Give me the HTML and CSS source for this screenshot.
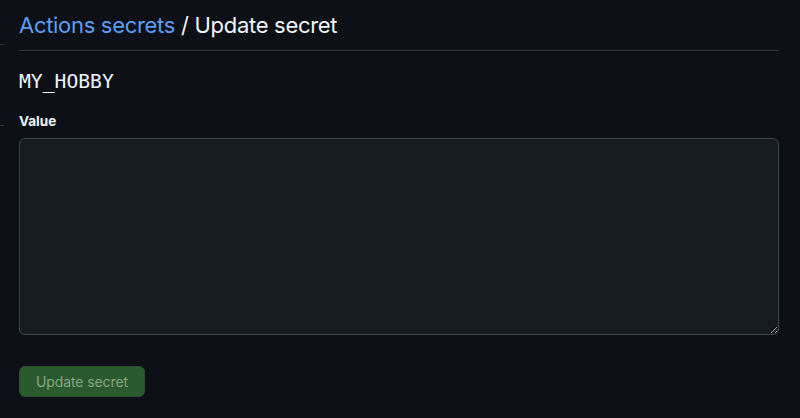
FILE: index.html
```html
<!DOCTYPE html>
<html>
<head>
<meta charset="utf-8">
<link rel="stylesheet" href="styles.css">
</head>
<body>
<span class="edge edge-top"></span>
<span class="edge edge-mid"></span>
<main class="page">
  <header class="subhead">
    <h2 class="subhead-title"><a class="crumb" href="#">Actions secrets</a> / Update secret</h2>
  </header>
  <div class="secret-name">MY_HOBBY</div>
  <form class="form">
    <label class="label" for="value">Value</label>
    <textarea id="value" class="textarea"></textarea>
    <div class="actions">
      <button type="button" class="btn-primary" disabled>Update secret</button>
    </div>
  </form>
</main>
</body>
</html>
```

FILE: styles.css
```css
html, body {
  margin: 0;
  padding: 0;
  background: #0d1117;
  color: #e6edf3;
  font-family: "Inter", "Liberation Sans", sans-serif;
}
.edge {
  position: absolute;
  left: 0;
  width: 4px;
  height: 1px;
  background: #30363d;
}
.edge-top { top: 44px; }
.edge-mid { top: 125px; }
.page {
  padding: 0 21px 0 19px;
}
.subhead {
  border-bottom: 1px solid #30363d;
  padding: 11px 0 10px;
}
.subhead-title {
  margin: 0;
  font-size: 22px;
  font-weight: 400;
  letter-spacing: -0.3px;
  line-height: 29px;
  color: #f0f6fc;
}
.crumb {
  color: #5c9ef7;
  text-decoration: none;
}
.secret-name {
  margin-top: 19px;
  font-family: "DejaVu Sans Mono", "Liberation Mono", monospace;
  font-size: 19.7px;
  line-height: 24px;
  color: #f0f6fc;
}
.form {
  margin-top: 18px;
  display: flex;
  flex-direction: column;
}
.label {
  font-size: 13.5px;
  font-weight: 700;
  line-height: 18px;
  color: #f0f6fc;
}
.textarea {
  margin-top: 8px;
  height: 197px;
  box-sizing: border-box;
  background: #161b22;
  border: 1px solid #3d444d;
  border-radius: 6px;
  color: #e6edf3;
  resize: vertical;
  padding: 8px;
  display: block;
}
.actions {
  margin-top: 31px;
}
.btn-primary {
  font-family: "Inter", "Liberation Sans", sans-serif;
  background: #2a5a2d;
  color: #86a78a;
  border: 1px solid #2c4f30;
  border-radius: 6px;
  height: 31px;
  width: 126px;
  padding: 0;
  white-space: nowrap;
  font-size: 14px;
  font-weight: 400;
  letter-spacing: -0.1px;
}
```
